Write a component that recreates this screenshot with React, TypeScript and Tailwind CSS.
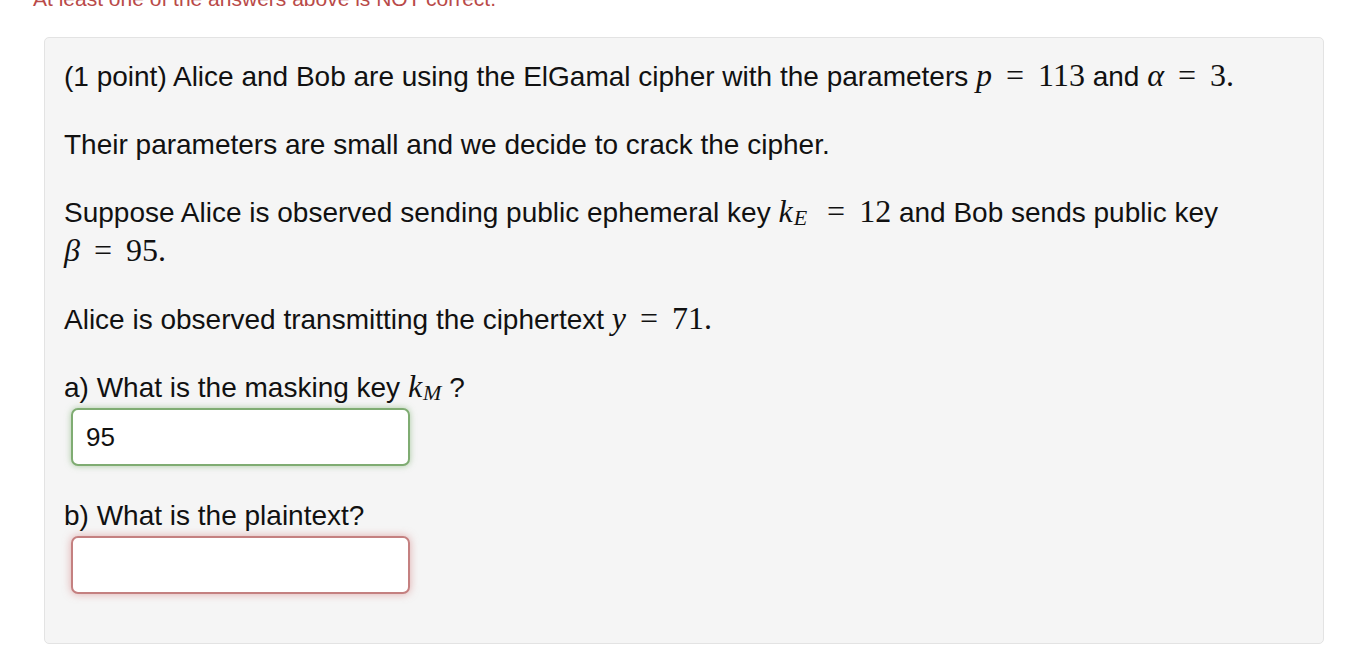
function M({ children }: { children: React.ReactNode }) {
  return <span className="font-['Liberation_Serif',serif] text-[32px] leading-[30px] whitespace-nowrap">{children}</span>;
}

function V({ children }: { children: React.ReactNode }) {
  return <i className="italic">{children}</i>;
}

function Sub({ children }: { children: React.ReactNode }) {
  return <sub className="italic text-[22px] leading-none relative top-[3px] ml-[1px]">{children}</sub>;
}

function Eq() {
  return <span className="mx-[14px]">=</span>;
}

export default function App() {
  return (
    <div className="w-[1370px] h-[654px] bg-white overflow-hidden font-['Liberation_Sans',Arial,sans-serif] text-[#111]">
      <div className="ml-[33px] -mt-[12px] text-[21px] leading-[21px] text-[#b94a48] whitespace-nowrap">
        At least one of the answers above is NOT correct.
      </div>

      <div className="ml-[44px] mt-[28px] w-[1280px] h-[607px] bg-[#f5f5f5] border border-[#e3e3e3] rounded-[5px] px-[19px] pt-[21px] text-[28px] leading-[36px]">
        <p className="mb-[32px]">
          (1 point) Alice and Bob are using the ElGamal cipher with the parameters{" "}
          <M>
            <V>p</V>
            <Eq />
            113
          </M>{" "}
          and{" "}
          <M>
            <V>α</V>
            <Eq />
            3.
          </M>
        </p>

        <p className="mb-[32px]">Their parameters are small and we decide to crack the cipher.</p>

        <p className="mb-[32px]">
          Suppose Alice is observed sending public ephemeral key{" "}
          <M>
            <V>k</V>
            <Sub>E</Sub>
            <span className="ml-[6px]" />
            <Eq />
            12
          </M>{" "}
          and Bob sends public key
          <br />
          <span className="inline-block mt-[3px]">
            <M>
              <V>β</V>
              <Eq />
              95.
            </M>
          </span>
        </p>

        <p className="mb-[32px]">
          Alice is observed transmitting the ciphertext{" "}
          <M>
            <V>y</V>
            <Eq />
            71.
          </M>
        </p>

        <p>
          a) What is the masking key{" "}
          <M>
            <V>k</V>
            <Sub>M</Sub>
          </M>{" "}
          ?
        </p>
        <div className="ml-[7px] mt-[2px] w-[339px] h-[58px] bg-white rounded-[7px] border-2 border-[#7fac72] shadow-[0_0_6px_rgba(110,165,95,0.55)] flex items-center px-[13px] text-[26px]">
          95
        </div>

        <p className="mt-[32px]">b) What is the plaintext?</p>
        <div className="ml-[7px] mt-[2px] w-[339px] h-[58px] bg-white rounded-[7px] border-2 border-[#c48080] shadow-[0_0_9px_rgba(205,110,110,0.55)]"></div>
      </div>
    </div>
  );
}
